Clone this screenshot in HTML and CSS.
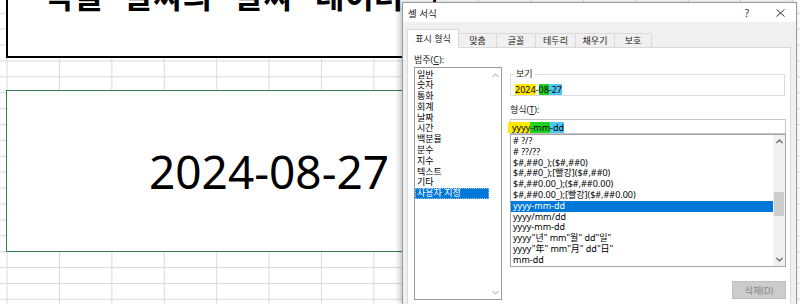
FILE: index.html
```html
<!DOCTYPE html>
<html lang="ko">
<head>
    <meta charset="UTF-8">
    <title>셀 서식</title>
    <link rel="stylesheet" href="styles.css">
</head>
<body>
    <div class="sheet">
        <div class="title-cell"><h1>엑셀 날짜의 날짜 데이터 표시</h1></div>
        <div class="date-cell">2024-08-27</div>
    </div>

    <div class="dialog">
        <div class="titlebar">
            <span class="title">셀 서식</span>
            <span class="help">?</span>
            <svg class="close" width="9" height="8" viewBox="0 0 9 8">
                <path d="M0.5 0.5 L8.5 7.5 M8.5 0.5 L0.5 7.5" stroke="#333" stroke-width="1" fill="none"/>
            </svg>
        </div>

        <div class="tabs">
            <div class="tab active" style="width: 52px">표시 형식</div>
            <div class="tab" style="width: 38px">맞춤</div>
            <div class="tab" style="width: 39px">글꼴</div>
            <div class="tab" style="width: 40px">테두리</div>
            <div class="tab" style="width: 39px">채우기</div>
            <div class="tab" style="width: 37px">보호</div>
        </div>

        <div class="panel">
            <div class="label">범주(<u>C</u>):</div>
            <div class="cols">
                <div class="listbox category">
                    <ul class="items">
                        <li>일반</li>
                        <li>숫자</li>
                        <li>통화</li>
                        <li>회계</li>
                        <li>날짜</li>
                        <li>시간</li>
                        <li>백분율</li>
                        <li>분수</li>
                        <li>지수</li>
                        <li>텍스트</li>
                        <li>기타</li>
                        <li class="selected">사용자 지정</li>
                    </ul>
                    <div class="scroll plain">
                        <svg class="arrow" width="7" height="5" viewBox="0 0 7 5"><polyline points="0.5,4 3.5,1 6.5,4"/></svg>
                        <svg class="arrow" width="7" height="5" viewBox="0 0 7 5"><polyline points="0.5,1 3.5,4 6.5,1"/></svg>
                    </div>
                </div>

                <div class="right">
                    <fieldset class="preview">
                        <legend>보기</legend>
                        <div class="sample"><span class="hl yellow">2024</span>-<span class="hl green">08</span><span class="hl cyan">-27</span></div>
                    </fieldset>

                    <div class="label format-label">형식(<u>T</u>):</div>
                    <div class="format-input"><span class="hl yellow first">yyyy</span><span class="hl green">-mm</span><span class="hl cyan">-dd</span></div>

                    <div class="listbox formats">
                        <ul class="items">
                            <li># ?/?</li>
                            <li># ??/??</li>
                            <li>$#,##0_);($#,##0)</li>
                            <li>$#,##0_);[빨강]($#,##0)</li>
                            <li>$#,##0.00_);($#,##0.00)</li>
                            <li>$#,##0.00_);[빨강]($#,##0.00)</li>
                            <li class="selected">yyyy-mm-dd</li>
                            <li>yyyy/mm/dd</li>
                            <li>yyyy-mm-dd</li>
                            <li>yyyy"년" mm"월" dd"일"</li>
                            <li>yyyy"年" mm"月" dd"日"</li>
                            <li>mm-dd</li>
                        </ul>
                        <div class="scroll">
                            <svg class="arrow" width="7" height="5" viewBox="0 0 7 5"><polyline points="0.5,4 3.5,1 6.5,4"/></svg>
                            <div class="track"><div class="thumb"></div></div>
                            <svg class="arrow" width="7" height="5" viewBox="0 0 7 5"><polyline points="0.5,1 3.5,4 6.5,1"/></svg>
                        </div>
                    </div>

                    <div class="actions">
                        <button disabled>삭제(D)</button>
                    </div>
                </div>
            </div>
        </div>
    </div>
</body>
</html>
```

FILE: styles.css
```css
* {
    box-sizing: border-box;
}

body {
    margin: 0;
    width: 800px;
    height: 304px;
    overflow: hidden;
    position: relative;
    background-color: #ffffff;
    font-family: "Noto Sans", "Noto Sans CJK KR", sans-serif;
}

/* spreadsheet */
.sheet {
    height: 304px;
    padding-left: 6px;
    overflow: hidden;
    background-image:
        linear-gradient(to right, #dadada 1px, transparent 1px),
        linear-gradient(to bottom, #dadada 1px, transparent 1px);
    background-size: 52.4px 100%, 100% 15.9px;
    background-position: 6.6px 0, 0 12.8px;
}

.title-cell {
    width: 430px;
    height: 58px;
    border: 2px solid #000000;
    border-top: none;
    background-color: #ffffff;
    overflow: hidden;
}

.title-cell h1 {
    margin: -22px 0 0 35px;
    font-family: "Noto Sans CJK KR", sans-serif;
    font-size: 32px;
    line-height: 32px;
    font-weight: 700;
    word-spacing: 13px;
    white-space: nowrap;
    color: #000000;
}

.date-cell {
    margin-top: 32px;
    width: 430px;
    height: 162px;
    border: 1px solid #2f7d4e;
    background-color: #ffffff;
    display: flex;
    align-items: center;
    padding-left: 142px;
    font-family: "Noto Sans", sans-serif;
    font-size: 46px;
    color: #000000;
}

/* dialog */
.dialog {
    position: absolute;
    top: 2px;
    left: 402px;
    width: 395px;
    height: 302px;
    background-color: #f0f0f0;
    border: 1px solid #9a9a9a;
    border-bottom: none;
    box-shadow: -2px 0 6px rgba(0, 0, 0, 0.25);
    font-size: 9px;
    color: #000000;
    display: flex;
    flex-direction: column;
}

.titlebar {
    height: 19px;
    flex: none;
    background-color: #ffffff;
    display: flex;
    align-items: center;
    padding-left: 5px;
}

.titlebar .title {
    flex: 1;
    font-size: 9.5px;
    color: #222222;
}

.titlebar .help {
    font-size: 10px;
    margin-right: 27px;
    color: #333333;
}

.titlebar .close {
    margin-right: 11px;
}

.tabs {
    display: flex;
    align-items: flex-end;
    padding: 7px 0 0 4px;
    margin-bottom: -1px;
}

.tab {
    height: 15px;
    line-height: 13px;
    text-align: center;
    border: 1px solid #d9d9d9;
    border-left: none;
    background-color: #f0f0f0;
    color: #222222;
}

.tab.active {
    position: relative;
    height: 19px;
    line-height: 17px;
    border-left: 1px solid #d9d9d9;
    border-bottom-color: #ffffff;
    background-color: #ffffff;
}

.panel {
    flex: 1;
    margin-left: 4px;
    width: 384px;
    border: 1px solid #d9d9d9;
    border-bottom: none;
    background-color: #ffffff;
    padding: 6px 0 0 6px;
}

.label {
    line-height: 12px;
    margin-bottom: 1px;
    color: #222222;
}

.cols {
    display: grid;
    grid-template-columns: 88px 276px;
    column-gap: 8px;
    align-items: start;
}

.listbox {
    display: flex;
    border: 1px solid #9a9a9a;
    background-color: #ffffff;
}

.listbox .items {
    list-style: none;
    margin: 0;
    flex: 1;
}

.listbox li {
    height: 10.8px;
    line-height: 10.8px;
    padding-left: 2px;
    white-space: nowrap;
}

.listbox li.selected {
    background-color: #0078d7;
    color: #ffffff;
}

.category {
    height: 233px;
}

.category .items {
    padding: 1.5px 0 0 0;
}

.category li.selected {
    outline: 1px dotted #9ec5ea;
    outline-offset: -1px;
}

.scroll {
    width: 12px;
    display: flex;
    flex-direction: column;
    align-items: center;
    background-color: #f0f0f0;
}

.scroll.plain {
    background-color: #ffffff;
    justify-content: space-between;
    padding: 5px 0 4px;
}

.scroll .arrow {
    fill: none;
    stroke: #606060;
    stroke-width: 1.2;
}

.scroll.plain .arrow {
    stroke: #c2c2c2;
}

.formats .scroll {
    padding: 4px 0 4px;
}

.track {
    flex: 1;
    width: 100%;
    padding: 48px 1px 0;
}

.thumb {
    height: 24px;
    background-color: #cdcdcd;
}

/* right column */
.preview {
    margin: 1px 0 0 0;
    padding: 4px 3px 0;
    min-width: 0;
    border: 1px solid #dcdcdc;
    width: 275px;
}

.preview legend {
    padding: 0 2px;
    line-height: 12px;
    color: #222222;
}

.sample {
    height: 11px;
    line-height: 11px;
    padding-left: 1px;
}

.hl {
    display: inline-block;
    height: 11px;
    line-height: 11px;
}

.hl.yellow {
    background-color: #ffe900;
}

.hl.green {
    background-color: #20d320;
}

.hl.cyan {
    background-color: #4cc6f5;
}

.format-label {
    margin-top: 8px;
    margin-bottom: 3px;
}

.format-input {
    height: 15px;
    border: 1px solid #c4c4c4;
    padding: 2px 0 0 1px;
    line-height: 11px;
}

.format-input .hl.first {
    margin-left: -4px;
    padding-left: 4px;
}

.formats {
    height: 133px;
    border-color: #a6a6a6;
}

.formats .items {
    padding: 1px 0 0 0;
}

.actions {
    display: flex;
    justify-content: flex-end;
    margin-top: 14px;
}

.actions button {
    width: 54px;
    height: 18px;
    padding: 0;
    border: 1px solid #bfbfbf;
    background-color: #cccccc;
    color: #838383;
    font-family: "Noto Sans", "Noto Sans CJK KR", sans-serif;
    font-size: 9px;
}
```
